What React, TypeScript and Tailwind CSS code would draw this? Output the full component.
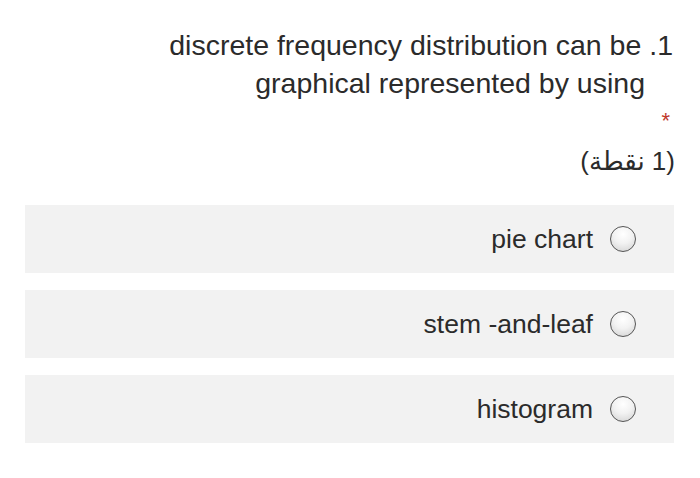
import React from "react";

function Radio() {
  return (
    <span className="inline-block h-[26px] w-[26px] rounded-full border-[1.5px] border-[#555555] bg-[radial-gradient(circle_at_50%_30%,#ffffff_0%,#f2f2f2_45%,#d0d0d0_100%)] shrink-0" />
  );
}

function Option({ label }: { label: string }) {
  return (
    <div className="h-[68px] bg-[#f2f2f2] flex items-center justify-end pr-[38px] gap-[17px]">
      <span className="text-[26.5px] text-[#2b2b2b] leading-none">{label}</span>
      <Radio />
    </div>
  );
}

export default function App() {
  return (
    <div
      className="w-[700px] h-[478px] bg-white overflow-hidden"
      style={{ fontFamily: '"Liberation Sans", Arial, "DejaVu Sans", sans-serif' }}
    >
      <div className="pt-[26px] pr-[27px] text-right text-[28.5px] leading-[38px] text-[#2b2b2b]">
        <div>discrete frequency distribution can be .1</div>
        <div className="pr-[28px]">graphical represented by using</div>
      </div>
      <div className="pr-[30px] text-right text-[#c0392b] text-[22px] leading-none mt-[8px]">*</div>
      <div
        dir="rtl"
        className="pr-[25px] text-right text-[26px] text-[#2b2b2b] mt-[14px] leading-[30px]"
      >
        (1 نقطة)
      </div>
      <div className="px-[25px] mt-[29px] flex flex-col gap-[17px] w-[699px]">
        <Option label="pie chart" />
        <Option label="stem -and-leaf" />
        <Option label="histogram" />
      </div>
    </div>
  );
}
